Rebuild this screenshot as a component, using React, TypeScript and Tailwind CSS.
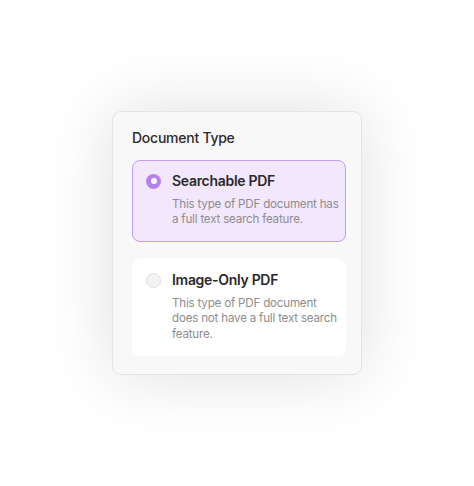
import React, { useState } from 'react';

const OPTIONS = [
  {
    id: 'searchable',
    title: 'Searchable PDF',
    description: 'This type of PDF document has a full text search feature.',
  },
  {
    id: 'image',
    title: 'Image-Only PDF',
    description: 'This type of PDF document does not have a full text search feature.',
  },
];

export default function App() {
  const [selected, setSelected] = useState('searchable');

  return (
    <div
      className="flex h-[486px] w-full items-center justify-center bg-white"
      style={{ fontFamily: 'Inter, "Noto Sans", sans-serif' }}
    >
      <div className="w-[250px] rounded-[9px] border border-[#e4e4e4] bg-[#f8f8f8] pb-[18px] pl-[19px] pr-[17px] pt-[16px] shadow-[0_0_70px_rgba(0,0,0,0.13)]">
        <h2 className="mb-[12px] text-[14px] font-medium leading-[20px] tracking-[-0.25px] text-[#2b2b2b]">
          Document Type
        </h2>
        <div className="flex flex-col gap-[17px]">
          {OPTIONS.map(opt => {
            const active = selected === opt.id;
            return (
              <button
                key={opt.id}
                onClick={() => setSelected(opt.id)}
                className={`flex w-[214px] gap-[11px] rounded-[8px] border pb-[13px] pl-[13px] pr-[6px] pt-[12px] text-left ${
                  active ? 'border-[#c59cf0] bg-[#f3e7fd]' : 'border-transparent bg-white'
                }`}
              >
                <span
                  className={`mt-[1px] flex h-[15px] w-[15px] shrink-0 items-center justify-center rounded-full ${
                    active ? 'bg-[#b682ef]' : 'border border-[#dedede] bg-[#f3f3f3]'
                  }`}
                >
                  {active && <span className="h-[6px] w-[6px] rounded-full bg-white" />}
                </span>
                <div className="flex-1">
                  <div className="text-[14px] font-semibold leading-[16px] tracking-[-0.3px] text-[#2a2a2a]">
                    {opt.title}
                  </div>
                  <p className="mt-[8px] text-[11.6px] leading-[15.5px] tracking-[-0.2px] text-[#8d8d8d]">
                    {opt.description}
                  </p>
                </div>
              </button>
            );
          })}
        </div>
      </div>
    </div>
  );
}
